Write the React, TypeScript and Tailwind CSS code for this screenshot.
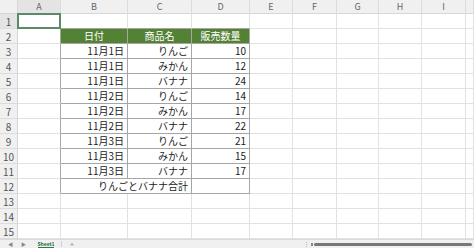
import React from "react";

const colWidths = [43, 67, 64, 58, 43, 44, 42, 43, 44];
const letters = ["A", "B", "C", "D", "E", "F", "G", "H", "I", "J"];

const rows: [string, string, string][] = [
  ["11月1日", "りんご", "10"],
  ["11月1日", "みかん", "12"],
  ["11月1日", "バナナ", "24"],
  ["11月2日", "りんご", "14"],
  ["11月2日", "みかん", "17"],
  ["11月2日", "バナナ", "22"],
  ["11月3日", "りんご", "21"],
  ["11月3日", "みかん", "15"],
  ["11月3日", "バナナ", "17"],
];

// table area: rows 2..12, cols B..D (col index 1..3)
const inTable = (r: number, c: number) => r >= 2 && r <= 12 && c >= 1 && c <= 3;

function cellContent(r: number, c: number) {
  if (r === 2) return ["日付", "商品名", "販売数量"][c - 1];
  if (r >= 3 && r <= 11) return rows[r - 3][c - 1];
  return "";
}

function Cell({ r, c }: { r: number; c: number }) {
  const t = inTable(r, c);
  const rightDark = t || inTable(r, c + 1);
  const bottomDark = t || inTable(r + 1, c);
  const header = r === 2 && t;
  const merged = r === 12 && c === 1;
  if (r === 12 && c === 2) return null;

  return (
    <div
      className={`relative flex items-center border-r border-b ${
        rightDark ? "border-r-[#a6a6a6]" : "border-r-[#e2e2e2]"
      } ${bottomDark ? "border-b-[#a6a6a6]" : "border-b-[#e2e2e2]"} ${
        header ? "bg-[#548235] text-white justify-center" : "bg-white text-[#222] justify-end pr-[3px]"
      } ${merged ? "col-span-2 justify-center pr-0" : ""} text-[10px] leading-none whitespace-nowrap`}
    >
      {merged ? "りんごとバナナ合計" : t ? cellContent(r, c) : ""}
      {r === 1 && c === 0 && (
        <div className="absolute -left-px -top-px -right-px -bottom-px border-2 border-[#5a8a66]" />
      )}
    </div>
  );
}

export default function App() {
  const tpl = `18px ${colWidths.map((w) => w + "px").join(" ")} 1fr`;
  return (
    <div
      className="w-[474px] h-[248px] overflow-hidden bg-white flex flex-col"
      style={{ fontFamily: '"Noto Sans CJK JP", "Noto Sans", sans-serif' }}
    >
      <div className="grid" style={{ gridTemplateColumns: tpl, gridTemplateRows: "14px repeat(15, 15px)" }}>
        <div className="bg-[#f0f0f0] border-r border-b border-[#d6d6d6]" />
        {letters.map((l, i) => (
          <div
            key={l}
            className={`flex items-center justify-center border-r border-b border-r-[#dcdcdc] text-[9px] text-[#666] ${
              i === 0 ? "bg-[#e4e4e4] border-b-[#c0c0c0]" : "bg-[#f0f0f0] border-b-[#d6d6d6]"
            }`}
          >
            {i < 9 ? l : ""}
          </div>
        ))}
        {Array.from({ length: 15 }, (_, k) => k + 1).map((r) => (
          <React.Fragment key={r}>
            <div
              className={`flex items-center justify-center border-r border-b border-r-[#d6d6d6] border-b-[#dcdcdc] text-[10px] text-[#555] ${
                r === 1 ? "bg-[#e4e4e4]" : "bg-[#f0f0f0]"
              }`}
            >
              {r}
            </div>
            {Array.from({ length: 10 }, (_, c) => (
              <Cell key={c} r={r} c={c} />
            ))}
          </React.Fragment>
        ))}
      </div>
      <div className="flex-1 flex items-center bg-[#f0f0f0] border-t border-[#dadada] text-[#888]">
        <div className="flex items-center gap-[8px] pl-[8px] w-[32px] text-[5px]">
          <span>◀</span>
          <span>▶</span>
        </div>
        <div className="flex flex-col items-center ml-[3px] w-[22px]">
          <span className="text-[5px] leading-none text-[#2b6a3a] font-bold">Sheet1</span>
          <div className="w-[16px] h-[1px] bg-[#2b7a45] mt-[1px]" />
        </div>
        <div className="w-px h-[6px] bg-[#cfcfcf] ml-[4px]" />
        <span className="ml-[8px] text-[7px] leading-none">+</span>
        <div className="ml-auto flex items-center w-[170px] pr-[2px]">
          <span className="text-[5px] mr-[2px]">⋮</span>
          <div className="w-[2px] h-[3px] bg-[#888] mr-[1px]" />
          <div className="flex-1 h-[3px] bg-[#777] rounded-sm" />
        </div>
      </div>
    </div>
  );
}
